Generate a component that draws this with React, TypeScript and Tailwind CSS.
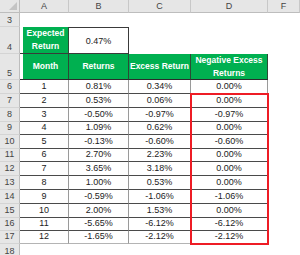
import React from "react";

const font = { fontFamily: '"Liberation Sans", Arial, sans-serif' };

const rows: [string, string, string, string, string, number][] = [
  ["6", "1", "0.81%", "0.34%", "0.00%", 14],
  ["7", "2", "0.53%", "0.06%", "0.00%", 14],
  ["8", "3", "-0.50%", "-0.97%", "-0.97%", 14],
  ["9", "4", "1.09%", "0.62%", "0.00%", 13],
  ["10", "5", "-0.13%", "-0.60%", "-0.60%", 14],
  ["11", "6", "2.70%", "2.23%", "0.00%", 13],
  ["12", "7", "3.65%", "3.18%", "0.00%", 14],
  ["13", "8", "1.00%", "0.53%", "0.00%", 14],
  ["14", "9", "-0.59%", "-1.06%", "-1.06%", 14],
  ["15", "10", "2.00%", "1.53%", "0.00%", 14],
  ["16", "11", "-5.65%", "-6.12%", "-6.12%", 13],
  ["17", "12", "-1.65%", "-2.12%", "-2.12%", 13],
];

function RowNum({ n, h, end = true }: { n: string; h: number; end?: boolean }) {
  return (
    <div
      className={`w-[20px] shrink-0 bg-[#e6e6e6] border-r border-b border-r-[#bdbdbd] border-b-[#d4d4d4] flex justify-center text-[9px] text-[#444] leading-none pb-[1px] ${end ? "items-end" : "items-center"}`}
      style={{ height: h }}
    >
      {n}
    </div>
  );
}

export default function App() {
  return (
    <div className="relative w-[300px] h-[255px] overflow-hidden bg-white" style={font}>
      {/* column header row */}
      <div className="flex h-[13px]">
        <div className="relative w-[20px] shrink-0 bg-[#e6e6e6] border-r border-b border-[#bdbdbd]">
          <div className="absolute right-[2px] bottom-[2px] w-0 h-0 border-l-[8px] border-l-transparent border-b-[8px] border-b-[#c4c4c4]" />
        </div>
        {[
          ["A", "w-[49px]"],
          ["B", "w-[60px]"],
          ["C", "w-[62px]"],
          ["D", "w-[77px]"],
          ["F", "flex-1"],
        ].map(([l, w]) => (
          <div
            key={l}
            className={`${w} shrink-0 bg-[#e6e6e6] border-r border-b border-r-[#c8c8c8] border-b-[#bdbdbd] flex items-center justify-center text-[9px] text-[#444] leading-none`}
          >
            {l}
          </div>
        ))}
      </div>

      {/* row 3 */}
      <div className="flex h-[14px]">
        <RowNum n="3" h={14} />
        <div className="flex-1" />
      </div>

      {/* row 4 */}
      <div className="flex h-[27px]">
        <RowNum n="4" h={27} />
        <div className="w-[49px] shrink-0 pl-[3px] border-b border-[#3a3a3a]">
          <div className="h-full bg-[#00b050] border-r border-[#2c4a35] flex flex-col items-center justify-center text-white font-bold text-[8.5px] leading-[13px]">
            <span>Expected</span>
            <span>Return</span>
          </div>
        </div>
        <div className="w-[60px] shrink-0 border-t border-r border-b border-[#3a3a3a] flex items-center justify-center text-[9px] text-[#222] pt-[2px]">
          0.47%
        </div>
        <div className="flex-1" />
      </div>

      {/* row 5 */}
      <div className="flex h-[26px]">
        <RowNum n="5" h={26} />
        <div className="w-[49px] shrink-0 pl-[3px] border-b border-[#2b2b2b]">
          <div className="h-full bg-[#00b050] border-r border-[#2c4a35] flex items-center justify-center text-white font-bold text-[8.5px]">
            Month
          </div>
        </div>
        <div className="w-[60px] shrink-0 bg-[#00b050] border-r border-b border-r-[#2c4a35] border-b-[#2b2b2b] flex items-center justify-center text-white font-bold text-[8.5px]">
          Returns
        </div>
        <div className="w-[62px] shrink-0 bg-[#00b050] border-r border-b border-r-[#2c4a35] border-b-[#2b2b2b] flex items-center justify-center text-white font-bold text-[8.5px] whitespace-nowrap">
          Excess Return
        </div>
        <div className="w-[77px] shrink-0 bg-[#00b050] border-r border-b border-r-[#2c4a35] border-b-[#2b2b2b] flex flex-col items-center justify-center text-white font-bold text-[8.5px] leading-[13px]">
          <span>Negative Excess</span>
          <span>Returns</span>
        </div>
        <div className="flex-1" />
      </div>

      {/* data rows */}
      {rows.map(([n, m, r, e, ne, h], i) => {
        const last = i === rows.length - 1;
        const hb = last ? "border-b-[#b4b4b4]" : "border-b-[#4a4a4a]";
        return (
          <div key={n} className="flex text-[9px] text-[#222]" style={{ height: h }}>
            <RowNum n={n} h={h} end={false} />
            <div className={`w-[49px] shrink-0 border-r border-b border-r-[#9a9a9a] ${hb} flex items-center justify-center`}>
              {m}
            </div>
            <div className={`w-[60px] shrink-0 border-r border-b border-r-[#9a9a9a] ${hb} flex items-center justify-center`}>
              {r}
            </div>
            <div className={`w-[62px] shrink-0 border-r border-b border-r-[#9a9a9a] ${hb} flex items-center justify-center`}>
              {e}
            </div>
            <div className={`w-[77px] shrink-0 border-r border-b border-r-[#9a9a9a] ${hb} flex items-center justify-center`}>
              {ne}
            </div>
            <div className="flex-1" />
          </div>
        );
      })}

      {/* row 18 */}
      <div className="flex h-[14px]">
        <RowNum n="18" h={14} />
        <div className="flex-1" />
      </div>

      {/* red highlight box */}
      <div className="absolute left-[190px] top-[93px] w-[79px] h-[152px] border-2 border-[#ee1c25]" />
    </div>
  );
}
